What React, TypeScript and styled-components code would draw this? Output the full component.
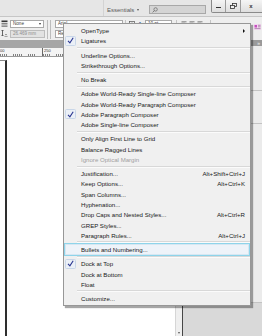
import React from 'react';
import styled, { createGlobalStyle } from 'styled-components';

type MenuEntry =
  | 'sep'
  | {
      label: string;
      shortcut?: string;
      checked?: boolean;
      disabled?: boolean;
      submenu?: boolean;
      highlighted?: boolean;
    };

const entries: MenuEntry[] = [
  { label: 'OpenType', submenu: true },
  { label: 'Ligatures', checked: true },
  'sep',
  { label: 'Underline Options...' },
  { label: 'Strikethrough Options...' },
  'sep',
  { label: 'No Break' },
  'sep',
  { label: 'Adobe World-Ready Single-line Composer' },
  { label: 'Adobe World-Ready Paragraph Composer' },
  { label: 'Adobe Paragraph Composer', checked: true },
  { label: 'Adobe Single-line Composer' },
  'sep',
  { label: 'Only Align First Line to Grid' },
  { label: 'Balance Ragged Lines' },
  { label: 'Ignore Optical Margin', disabled: true },
  'sep',
  { label: 'Justification...', shortcut: 'Alt+Shift+Ctrl+J' },
  { label: 'Keep Options...', shortcut: 'Alt+Ctrl+K' },
  { label: 'Span Columns...' },
  { label: 'Hyphenation...' },
  { label: 'Drop Caps and Nested Styles...', shortcut: 'Alt+Ctrl+R' },
  { label: 'GREP Styles...' },
  { label: 'Paragraph Rules...', shortcut: 'Alt+Ctrl+J' },
  'sep',
  { label: 'Bullets and Numbering...', highlighted: true },
  'sep',
  { label: 'Dock at Top', checked: true },
  { label: 'Dock at Bottom' },
  { label: 'Float' },
  'sep',
  { label: 'Customize...' },
];

export default function App() {
  return (
    <>
      <GlobalStyle />
      <Screen>
        <TitleBar>
          <TitleDivider />
          <WorkspaceLabel>Essentials</WorkspaceLabel>
          <Caret />
          <SearchBox>
            <MagnifierIcon />
          </SearchBox>
          <WindowButtons>
            <WinButton $w={13}>
              <MinimizeGlyph />
            </WinButton>
            <WinButton $w={14}>
              <RestoreIcon />
            </WinButton>
            <WinButton $w={23}>
              <CloseGlyph>x</CloseGlyph>
            </WinButton>
          </WindowButtons>
        </TitleBar>

        <ControlPanel>
          <FieldGroup $ml={1}>
            <FieldRow>
              <ParaRuleIcon />
              <Field $w={34}>
                None
                <FieldCaret />
              </Field>
            </FieldRow>
            <FieldRow>
              <BaselineIcon />
              <Field $w={35} $disabled>26.469 mm</Field>
            </FieldRow>
          </FieldGroup>
          <DoubleRule />
          <FieldGroup $ml={4}>
            <FieldRow>
              <Field $w={68}>
                Arial
                <FieldCaret />
              </Field>
            </FieldRow>
            <FieldRow>
              <Field $w={68}>
                Regular
                <FieldCaret />
              </Field>
            </FieldRow>
          </FieldGroup>
          <SingleRule $ml={2} />
          <FieldGroup $ml={3}>
            <FieldRow>
              <SizeIcon />
              <CapIcon>A</CapIcon>
              <Field $w={27}>
                10 pt
                <FieldCaret />
              </Field>
            </FieldRow>
            <FieldRow>
              <SizeIcon />
              <CapIcon>A</CapIcon>
              <Field $w={27}>
                12 pt
                <FieldCaret />
              </Field>
            </FieldRow>
          </FieldGroup>
          <SingleRule $ml={4} />
          <FieldGroup $ml={4}>
            <FieldRow>
              <AlignIcon />
              <AlignIcon />
              <AlignIcon />
            </FieldRow>
          </FieldGroup>
          <SingleRule $ml={7} />
          <PanelMenuIcon />
        </ControlPanel>

        <Workspace>
          <DocColumn>
            <TabStrip />
            <Ruler>
              <RulerLabel>00</RulerLabel>
              <RulerLabel>250</RulerLabel>
              <RulerLabel>300</RulerLabel>
              <RulerLabel>350</RulerLabel>
            </Ruler>
            <CanvasRow>
              <Pasteboard>
                <PageEdge />
              </Pasteboard>
              <VScroll>
                <ScrollArrow />
              </VScroll>
            </CanvasRow>
          </DocColumn>
          <Dock>
            <DockHeader>»</DockHeader>
            <DockPanel $h={44} />
            <DockPanel $h={32} />
            <DockPanel $h={178} />
          </Dock>
        </Workspace>

        <Menu>
          {entries.map((entry, i) =>
            entry === 'sep' ? (
              <Separator key={i} />
            ) : (
              <Item key={i} $highlighted={entry.highlighted}>
                <CheckSlot $checked={entry.checked}>
                  {entry.checked && (
                    <svg width="7" height="7" viewBox="0 0 7 7">
                      <path d="M1 3.8 L2.9 5.8 L6.2 0.8" fill="none" stroke="#2a3590" strokeWidth="1.1" />
                    </svg>
                  )}
                </CheckSlot>
                <ItemLabel $disabled={entry.disabled}>{entry.label}</ItemLabel>
                {entry.shortcut && <Shortcut>{entry.shortcut}</Shortcut>}
                {entry.submenu && <SubArrow />}
              </Item>
            )
          )}
        </Menu>
      </Screen>
    </>
  );
}

function MagnifierIcon() {
  return (
    <svg width="6" height="6" viewBox="0 0 6 6">
      <circle cx="3.6" cy="2.4" r="1.7" fill="none" stroke="#666" strokeWidth="0.7" />
      <path d="M2.4 3.6 L0.6 5.4" stroke="#666" strokeWidth="0.8" />
    </svg>
  );
}

function RestoreIcon() {
  return (
    <svg width="7" height="6" viewBox="0 0 7 6">
      <rect x="2.5" y="0.5" width="4" height="3" fill="none" stroke="#333" strokeWidth="0.8" />
      <rect x="0.5" y="2.5" width="4" height="3" fill="#f0f0f0" stroke="#333" strokeWidth="0.8" />
    </svg>
  );
}

function ParaRuleIcon() {
  return (
    <svg width="7" height="7" viewBox="0 0 7 7">
      <rect x="0.5" y="0.5" width="6" height="1.6" fill="#333" />
      <path d="M0.5 3.5 H6.5 M0.5 5 H6.5 M0.5 6.4 H6.5" stroke="#555" strokeWidth="0.7" />
    </svg>
  );
}

function BaselineIcon() {
  return (
    <svg width="7" height="7" viewBox="0 0 7 7">
      <path d="M1.5 0.5 V5.5 M0.5 0.5 H2.5 M0.5 5.5 H2.5" stroke="#444" strokeWidth="0.8" />
      <path d="M3.5 6.4 H6.6 M4 4.5 H6" stroke="#777" strokeWidth="0.7" />
    </svg>
  );
}

function SizeIcon() {
  return (
    <svg width="6" height="6" viewBox="0 0 6 6">
      <rect x="0.5" y="0.5" width="5" height="5" fill="none" stroke="#555" strokeWidth="0.7" />
      <path d="M1.5 3 H4.5 M3 1.5 V4.5" stroke="#555" strokeWidth="0.7" />
    </svg>
  );
}

function AlignIcon() {
  return (
    <svg width="6" height="6" viewBox="0 0 6 6">
      <path d="M0.5 0.8 H5.5 M0.5 2.3 H4 M0.5 3.8 H5.5 M0.5 5.3 H4" stroke="#555" strokeWidth="0.7" />
    </svg>
  );
}

function PanelMenuIcon() {
  return (
    <PanelMenuBox>
      <svg width="7" height="6" viewBox="0 0 7 6">
        <rect x="0" y="0" width="7" height="6" fill="#f2d6ef" />
        <rect x="0.5" y="1" width="2.5" height="2.5" fill="#c54fc0" />
        <path d="M4 1.3 H6.5 M4 2.8 H6.5 M0.5 4.6 H6.5" stroke="#8a5a8a" strokeWidth="0.6" />
      </svg>
    </PanelMenuBox>
  );
}

const GlobalStyle = createGlobalStyle`
  html, body {
    margin: 0;
    padding: 0;
  }
  body {
    width: 262px;
    height: 336px;
    overflow: hidden;
    background: #ffffff;
    font-family: "Liberation Sans", Arial, sans-serif;
  }
`;

const Screen = styled.div`
  position: relative;
  display: flex;
  flex-direction: column;
  width: 262px;
  height: 336px;
  overflow: hidden;
  background: #fff;
`;

/* ---------- title bar ---------- */

const TitleBar = styled.div`
  display: flex;
  align-items: flex-start;
  flex-shrink: 0;
  height: 17px;
  box-sizing: border-box;
  background: #e6e6e6;
  border-bottom: 1px solid #c6c6c6;
  & > * {
    flex-shrink: 0;
  }
`;

const TitleDivider = styled.div`
  margin-left: 103px;
  width: 1px;
  height: 16px;
  background: #d3d3d3;
`;

const WorkspaceLabel = styled.div`
  margin: 7px 0 0 3px;
  font-size: 6px;
  line-height: 6px;
  color: #5a5a5a;
`;

const Caret = styled.div`
  margin: 9px 0 0 3px;
  width: 0;
  height: 0;
  border-left: 1.5px solid transparent;
  border-right: 1.5px solid transparent;
  border-top: 2px solid #555;
`;

const SearchBox = styled.div`
  display: flex;
  align-items: center;
  margin: 5px 0 0 10px;
  width: 57px;
  height: 9px;
  box-sizing: border-box;
  padding-left: 2px;
  background: #d4d4d4;
  border: 1px solid #a8a8a8;
`;

const WindowButtons = styled.div`
  display: flex;
  margin-left: 5px;
  height: 13px;
  box-sizing: border-box;
  border: 1px solid #8a8a8a;
  border-top: none;
  border-radius: 0 0 2px 2px;
  overflow: hidden;
`;

const WinButton = styled.div<{ $w: number }>`
  display: flex;
  align-items: center;
  justify-content: center;
  width: ${(p) => p.$w}px;
  background: linear-gradient(#f5f5f5, #dedede);
  & + & {
    border-left: 1px solid #9c9c9c;
  }
`;

const MinimizeGlyph = styled.div`
  width: 5px;
  height: 1px;
  margin-top: 2px;
  background: #333;
`;

const CloseGlyph = styled.span`
  font-size: 6px;
  line-height: 6px;
  font-weight: bold;
  color: #333;
  margin-right: 4px;
`;

/* ---------- control panel ---------- */

const ControlPanel = styled.div`
  display: flex;
  align-items: flex-start;
  flex-shrink: 0;
  height: 23px;
  box-sizing: border-box;
  padding-top: 2.5px;
  background: #eeeeee;
  & > * {
    flex-shrink: 0;
  }
`;

const FieldGroup = styled.div<{ $ml: number }>`
  display: grid;
  grid-template-rows: 8px 8px;
  row-gap: 2px;
  margin-left: ${(p) => p.$ml}px;
`;

const FieldRow = styled.div`
  display: flex;
  align-items: center;
  gap: 2px;
`;

const Field = styled.div<{ $w: number; $disabled?: boolean }>`
  display: flex;
  align-items: center;
  width: ${(p) => p.$w}px;
  height: 8px;
  box-sizing: border-box;
  padding: 0 2px;
  border: 1px solid ${(p) => (p.$disabled ? '#bdbdbd' : '#a9a9a9')};
  background: ${(p) => (p.$disabled ? '#e2e2e2' : '#ffffff')};
  color: ${(p) => (p.$disabled ? '#8c8c8c' : '#404040')};
  font-size: 4.6px;
  white-space: nowrap;
`;

const FieldCaret = styled.span`
  margin-left: auto;
  width: 0;
  height: 0;
  border-left: 1.5px solid transparent;
  border-right: 1.5px solid transparent;
  border-top: 2px solid #333;
`;

const DoubleRule = styled.div`
  margin: 0 0 0 2px;
  width: 4px;
  height: 19px;
  box-sizing: border-box;
  border-left: 1px solid #bcbcbc;
  border-right: 1px solid #bcbcbc;
`;

const SingleRule = styled.div<{ $ml: number }>`
  margin-left: ${(p) => p.$ml}px;
  width: 1px;
  height: 19px;
  background: #c4c4c4;
`;

const CapIcon = styled.span`
  width: 6px;
  font-size: 6px;
  line-height: 6px;
  font-weight: bold;
  color: #4a6fa8;
  text-align: center;
`;

const PanelMenuBox = styled.div`
  display: flex;
  margin: 4.5px 1px 0 auto;
`;

/* ---------- workspace ---------- */

const Workspace = styled.div`
  display: flex;
  flex: 1;
  min-height: 0;
`;

const DocColumn = styled.div`
  display: flex;
  flex-direction: column;
  width: 182px;
  flex-shrink: 0;
`;

const TabStrip = styled.div`
  height: 8px;
  flex-shrink: 0;
  background: #a6a6a6;
`;

const Ruler = styled.div`
  display: flex;
  height: 8px;
  flex-shrink: 0;
  overflow: hidden;
  border-bottom: 1px solid #9a9a9a;
  background:
    repeating-linear-gradient(to right, transparent 0 42px, #6a6a6a 42px 43px) 0 0 / 100% 100% no-repeat,
    repeating-linear-gradient(to right, #808080 0 0.6px, transparent 0.6px 2.15px) 0 100% / 100% 2px no-repeat,
    #f4f4f4;
`;

const RulerLabel = styled.span`
  flex-shrink: 0;
  width: 43px;
  box-sizing: border-box;
  padding: 1px 0 0 1px;
  font-size: 4px;
  line-height: 4px;
  color: #333;
  &:first-child {
    padding-left: 0;
  }
`;

const CanvasRow = styled.div`
  display: flex;
  flex: 1;
  min-height: 0;
`;

const Pasteboard = styled.div`
  display: flex;
  flex: 1;
  padding-top: 3px;
  background: #ffffff;
`;

const PageEdge = styled.div`
  width: 5px;
  border-top: 1px solid #8a8a8a;
  border-right: 2px solid #2e2e2e;
`;

const VScroll = styled.div`
  display: flex;
  flex-direction: column;
  justify-content: flex-end;
  align-items: center;
  width: 7px;
  box-sizing: border-box;
  padding-bottom: 2px;
  background: #efefef;
  border-left: 1px solid #d6d6d6;
`;

const ScrollArrow = styled.div`
  width: 0;
  height: 0;
  border-left: 1.5px solid transparent;
  border-right: 1.5px solid transparent;
  border-top: 2px solid #555;
`;

const Dock = styled.div`
  display: flex;
  flex-direction: column;
  flex: 1;
  background: #d9d9d9;
  border-left: 1px solid #474747;
`;

const DockHeader = styled.div`
  display: flex;
  justify-content: flex-end;
  align-items: center;
  height: 6px;
  flex-shrink: 0;
  padding-right: 2px;
  background: #9a9a9a;
  color: #f0f0f0;
  font-size: 5px;
  line-height: 5px;
`;

const DockPanel = styled.div<{ $h: number }>`
  height: ${(p) => p.$h}px;
  flex-shrink: 0;
  background: #ebebeb;
  border-bottom: 1px solid #c3c3c3;
`;

/* ---------- menu ---------- */

const Menu = styled.div`
  position: absolute;
  left: 63px;
  top: 23px;
  z-index: 10;
  width: 188px;
  box-sizing: border-box;
  padding: 1.5px 0;
  background: #f0f0f0;
  border: 1px solid #979797;
  box-shadow: 2px 2px 1px rgba(0, 0, 0, 0.35);
  font-size: 6.1px;
  color: #202020;
`;

const Item = styled.div<{ $highlighted?: boolean }>`
  display: flex;
  align-items: center;
  height: 10.3px;
  padding: 0 5px 0 ${(p) => (p.$highlighted ? '0' : '1px')};
  margin: 0 ${(p) => (p.$highlighted ? '1px' : '0')};
  background: ${(p) => (p.$highlighted ? '#eef3f9' : 'transparent')};
  outline: ${(p) => (p.$highlighted ? '1.6px solid #8ed4ea' : 'none')};
  box-shadow: ${(p) => (p.$highlighted ? 'inset 0 0 0 1px #d7e7f2' : 'none')};
  white-space: nowrap;
`;

const CheckSlot = styled.div<{ $checked?: boolean }>`
  display: flex;
  align-items: center;
  justify-content: center;
  width: 11px;
  height: 10px;
  flex-shrink: 0;
  margin-right: 5px;
  box-sizing: border-box;
  border-radius: 1.5px;
  border: 1px solid ${(p) => (p.$checked ? '#c8d6e8' : 'transparent')};
  background: ${(p) => (p.$checked ? '#ebf0f7' : 'transparent')};
`;

const ItemLabel = styled.span<{ $disabled?: boolean }>`
  flex: 1;
  color: ${(p) => (p.$disabled ? '#a0a0a0' : 'inherit')};
`;

const Shortcut = styled.span`
  margin-left: 8px;
`;

const SubArrow = styled.span`
  width: 0;
  height: 0;
  border-top: 2px solid transparent;
  border-bottom: 2px solid transparent;
  border-left: 2.5px solid #111;
`;

const Separator = styled.div`
  height: 0;
  margin: 0.95px 0 0.95px 13px;
  border-top: 1px solid #d8d8d8;
  border-bottom: 1px solid #fbfbfb;
`;
